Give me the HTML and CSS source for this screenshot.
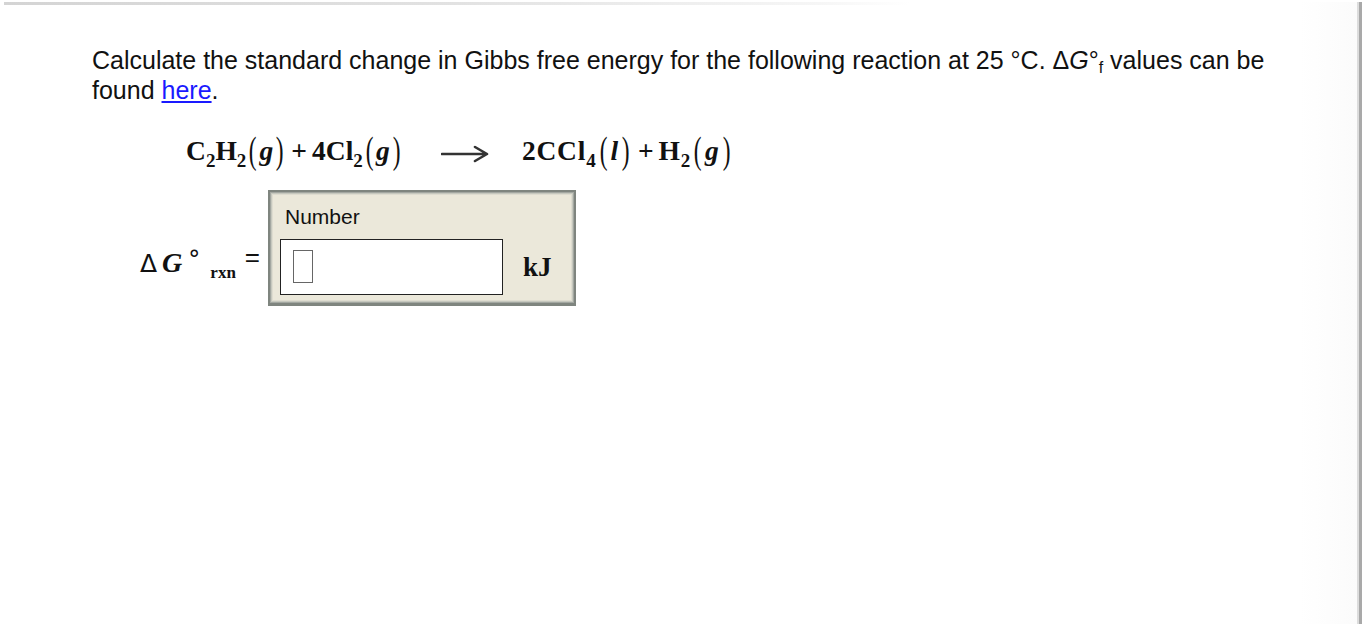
FILE: index.html
```html
<!DOCTYPE html>
<html>
<head>
<meta charset="utf-8">
<link rel="stylesheet" href="styles.css">
</head>
<body>
<div class="page">
  <div class="topline"></div>
  <div class="content">
    <p class="question">Calculate the standard change in Gibbs free energy for the following reaction at 25 °C. Δ<i>G</i>°<sub>f</sub> values can be found <a href="#">here</a>.</p>
    <div class="equation">
      <span class="sp">C<sub>2</sub>H<sub>2</sub><span class="par">(</span><i>g</i><span class="par">)</span></span>
      <span class="plus">+</span>
      <span class="sp">4Cl<sub>2</sub><span class="par">(</span><i>g</i><span class="par">)</span></span>
      <svg class="arrow" width="48" height="20" viewBox="0 0 48 20"><path d="M1 10 H45 M34 3 L46 10 L34 17" fill="none" stroke="#333" stroke-width="2.6" stroke-linecap="round" stroke-linejoin="round"/></svg>
      <span class="sp prod">2CCl<sub>4</sub><span class="par">(</span><i>l</i><span class="par">)</span></span>
      <span class="plus">+</span>
      <span class="sp prod">H<sub>2</sub><span class="par">(</span><i>g</i><span class="par">)</span></span>
    </div>
    <div class="answer">
      <div class="label"><span class="delta">Δ</span><i>G</i><span class="deg">°</span><span class="rxn">rxn</span><span class="eq">=</span></div>
      <div class="box">
        <div class="boxlabel">Number</div>
        <div class="boxrow">
          <div class="input"><span class="cursor"></span></div>
          <span class="unit">kJ</span>
        </div>
      </div>
    </div>
  </div>
</div>
</body>
</html>
```
FILE: styles.css
```css
html, body {
  margin: 0;
  padding: 0;
  background: #ffffff;
}
.page {
  min-height: 624px;
  box-sizing: border-box;
  border-right: 3px solid #a9a9a9;
  box-shadow: inset -2px 0 0 #dcdcdc;
  background: linear-gradient(to right, #ffffff 0, #ffffff 1300px, #fbfbfb 1357px);
}
.topline {
  margin-left: 4px;
  width: 906px;
  height: 3px;
  margin-top: 2px;
  background: linear-gradient(to right, #d4d4d4 0%, #e2e2e2 50%, #f6f6f6 90%, #ffffff 100%);
}
.content {
  padding-left: 92px;
}
.question {
  margin: 40px 0 0 0;
  font-family: "Liberation Sans", Arial, sans-serif;
  font-size: 25px;
  line-height: 30px;
  color: #111;
  width: 1200px;
}
.question sub {
  font-size: 16px;
  vertical-align: -4px;
  line-height: 0;
}
.question a {
  color: #1a1aff;
  text-decoration: underline;
  text-underline-offset: 2px;
}
.equation {
  margin: 30px 0 0 94px;
  display: flex;
  align-items: baseline;
  font-family: "Liberation Serif", "Times New Roman", serif;
  font-weight: bold;
  font-size: 27.5px;
  color: #111;
  height: 40px;
}
.equation sub {
  font-size: 19px;
  vertical-align: -7px;
  line-height: 0;
}
.equation .prod {
  letter-spacing: 0.8px;
}
.equation .par {
  display: inline-block;
  font-weight: normal;
  transform: scale(0.85, 1.35);
  margin: 0 2px;
}
.equation .plus {
  margin: 0 5px;
}
.equation .arrow {
  display: block;
  align-self: center;
  margin: 0 33px 0 38px;
  position: relative;
  top: -1px;
}
.answer {
  display: flex;
  align-items: flex-start;
  margin-top: 15px;
  margin-left: 48px;
}
.label {
  display: flex;
  align-items: baseline;
  margin-top: 57px;
  font-family: "Liberation Serif", "Times New Roman", serif;
  font-weight: bold;
  font-size: 28px;
  color: #111;
  width: 128px;
}
.label .delta {
  font-weight: normal;
  font-family: "DejaVu Sans", sans-serif;
  font-size: 25px;
  margin-right: 5px;
}
.label i {
  font-style: italic;
}
.label .deg {
  font-family: "DejaVu Sans", sans-serif;
  font-weight: normal;
  font-size: 24px;
  margin-left: 6px;
  position: relative;
  top: -4px;
}
.label .rxn {
  font-size: 17px;
  margin-left: 10px;
  position: relative;
  top: 6px;
}
.label .eq {
  font-family: "Liberation Sans", Arial, sans-serif;
  font-weight: normal;
  font-size: 26px;
  margin-left: 9px;
  position: relative;
  top: -6px;
}
.box {
  width: 308px;
  height: 116px;
  box-sizing: border-box;
  background: #ebe8da;
  border: 2px solid #7f857f;
  border-bottom-width: 3px;
  box-shadow: inset 0 0 0 1px #a3a7a1, inset 0 0 0 2px #c6c8be, inset 0 0 0 3px #dedcd0;
  padding: 13px 0 0 10px;
}
.boxlabel {
  font-family: "Liberation Sans", Arial, sans-serif;
  font-size: 21px;
  color: #111;
  margin-left: 5px;
  height: 34px;
}
.boxrow {
  display: flex;
  align-items: center;
}
.input {
  width: 223px;
  height: 56px;
  box-sizing: border-box;
  background: #ffffff;
  border: 1px solid #222;
  padding: 10px 0 0 12px;
}
.cursor {
  display: block;
  width: 20px;
  height: 33px;
  box-sizing: border-box;
  border: 1px solid #666;
}
.unit {
  font-family: "Liberation Serif", "Times New Roman", serif;
  font-weight: bold;
  font-size: 27px;
  color: #111;
  margin-left: 20px;
}
```
